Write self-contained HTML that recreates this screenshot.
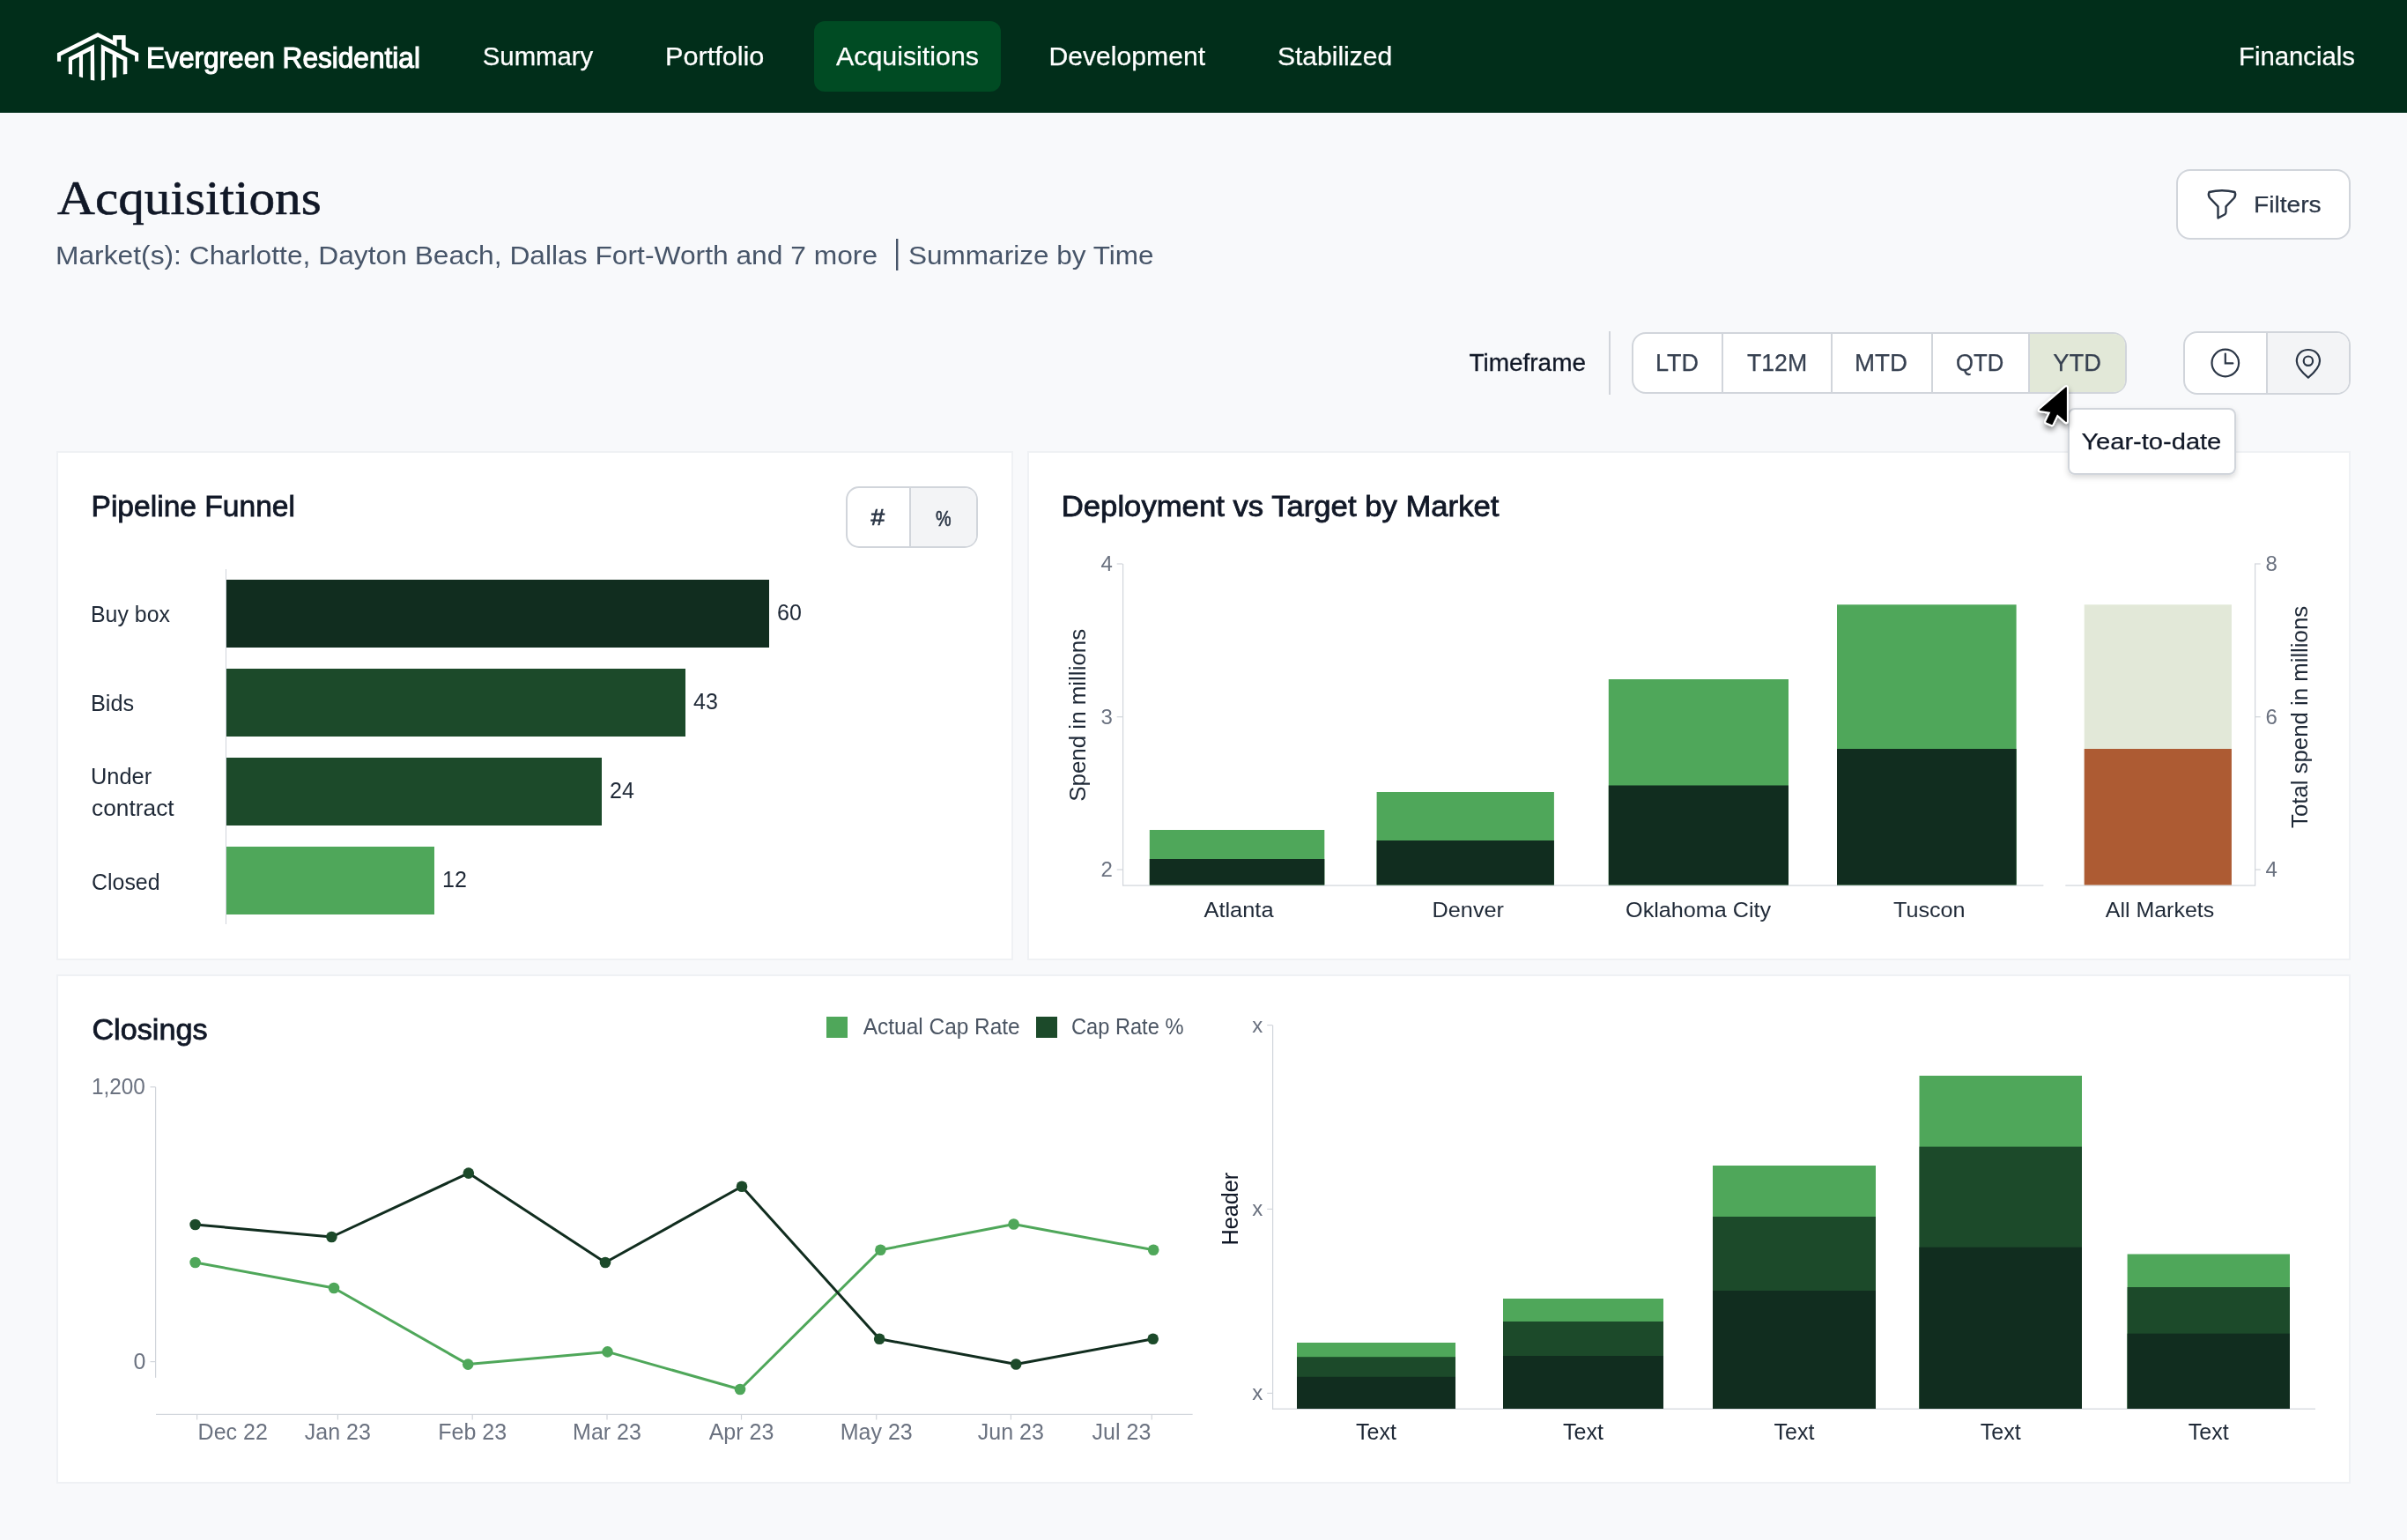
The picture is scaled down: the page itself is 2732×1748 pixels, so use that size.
<!DOCTYPE html>
<html><head><meta charset="utf-8"><title>Acquisitions</title>
<style>html,body{margin:0;padding:0;background:#f8f9fb;width:2732px;height:1748px;overflow:hidden;font-family:"Liberation Sans", sans-serif}</style>
</head><body>
<svg width="2732" height="1748" viewBox="0 0 2732 1748" style="display:block;will-change:transform"><rect x="0.0" y="0.0" width="2732.0" height="1748.0" fill="#f8f9fb" />
<rect x="0.0" y="0.0" width="2732.0" height="128.0" fill="#012e1a" />
<rect x="924.0" y="24.0" width="212.0" height="80.0" fill="#004b23" rx="12" />
<g transform="translate(50,20) scale(0.08309)" fill="#ffffff"><path d="M180,600 L180,485 L735,205 L940,310 L940,240 L1115,240 L1115,400 L1290,485 L1290,600 L1240,600 L1240,520 L1060,435 L1060,300 L995,300 L995,395 L735,265 L230,520 L230,600 Z"/><path d="M335,770 L335,545 L685,365 L690,860 L635,850 L635,455 L530,505 L530,820 L480,805 L480,535 L385,580 L385,775 Z"/><path d="M780,860 L780,365 L1135,545 L1135,770 L1080,775 L1080,580 L990,535 L990,815 L935,820 L935,505 L830,455 L830,850 Z"/></g>
<text x="166.0" y="76.9" font-family='"Liberation Sans", sans-serif' font-size="32.5" font-weight="normal" fill="#ffffff" text-anchor="start" textLength="310.9" lengthAdjust="spacingAndGlyphs" stroke="#ffffff" stroke-width="1.1">Evergreen Residential</text>
<text x="547.8" y="74.3" font-family='"Liberation Sans", sans-serif' font-size="29.5" font-weight="normal" fill="#ffffff" text-anchor="start" textLength="125.5" lengthAdjust="spacingAndGlyphs" stroke="#ffffff" stroke-width="0.25">Summary</text>
<text x="755.0" y="74.3" font-family='"Liberation Sans", sans-serif' font-size="29.5" font-weight="normal" fill="#ffffff" text-anchor="start" textLength="112.4" lengthAdjust="spacingAndGlyphs" stroke="#ffffff" stroke-width="0.25">Portfolio</text>
<text x="949.0" y="74.3" font-family='"Liberation Sans", sans-serif' font-size="29.5" font-weight="normal" fill="#ffffff" text-anchor="start" textLength="162.0" lengthAdjust="spacingAndGlyphs" stroke="#ffffff" stroke-width="0.25">Acquisitions</text>
<text x="1190.5" y="74.3" font-family='"Liberation Sans", sans-serif' font-size="29.5" font-weight="normal" fill="#ffffff" text-anchor="start" textLength="177.6" lengthAdjust="spacingAndGlyphs" stroke="#ffffff" stroke-width="0.25">Development</text>
<text x="1449.9" y="74.3" font-family='"Liberation Sans", sans-serif' font-size="29.5" font-weight="normal" fill="#ffffff" text-anchor="start" textLength="130.4" lengthAdjust="spacingAndGlyphs" stroke="#ffffff" stroke-width="0.25">Stabilized</text>
<text x="2541.0" y="74.3" font-family='"Liberation Sans", sans-serif' font-size="29.5" font-weight="normal" fill="#ffffff" text-anchor="start" textLength="132.0" lengthAdjust="spacingAndGlyphs" stroke="#ffffff" stroke-width="0.25">Financials</text>
<text x="65.1" y="243.0" font-family='"Liberation Serif", serif' font-size="55" font-weight="normal" fill="#111827" text-anchor="start" textLength="299.7" lengthAdjust="spacingAndGlyphs" stroke="#111827" stroke-width="0.55">Acquisitions</text>
<text x="63.0" y="300.0" font-family='"Liberation Sans", sans-serif' font-size="30" font-weight="normal" fill="#475569" text-anchor="start" textLength="933.1" lengthAdjust="spacingAndGlyphs" >Market(s): Charlotte, Dayton Beach, Dallas Fort-Worth and 7 more</text>
<rect x="1017.0" y="271.0" width="2.4" height="36.0" fill="#475569" />
<text x="1031.0" y="300.4" font-family='"Liberation Sans", sans-serif' font-size="30" font-weight="normal" fill="#475569" text-anchor="start" textLength="278.6" lengthAdjust="spacingAndGlyphs" >Summarize by Time</text>
<rect x="2471.0" y="193.0" width="196.0" height="78.0" fill="#ffffff" rx="15" stroke="#d1d5db" stroke-width="2" />
<path d="M2507.5,218 Q2522,214.5 2536.5,218 Q2538,221.5 2536,224.5 L2526.5,234.3 L2526.5,240.5 Q2526.5,242.5 2525,243.5 L2517.5,247.5 L2517.5,234.3 L2508,224.5 Q2506,221.5 2507.5,218 Z" fill="none" stroke="#2b3646" stroke-width="2.4" stroke-linejoin="round"/>
<text x="2558.0" y="240.8" font-family='"Liberation Sans", sans-serif' font-size="26" font-weight="normal" fill="#2b3646" text-anchor="start" textLength="76.6" lengthAdjust="spacingAndGlyphs" stroke="#2b3646" stroke-width="0.25">Filters</text>
<text x="1667.4" y="421.0" font-family='"Liberation Sans", sans-serif' font-size="27" font-weight="normal" fill="#111827" text-anchor="start" textLength="132.6" lengthAdjust="spacingAndGlyphs" stroke="#111827" stroke-width="0.3">Timeframe</text>
<rect x="1826.0" y="376.0" width="2.0" height="72.0" fill="#d1d5db" />
<rect x="1853.0" y="378.0" width="560.0" height="68.0" fill="#ffffff" rx="15" stroke="#d1d5db" stroke-width="2" />
<path d="M2303,379 L2398,379 Q2412,379 2412,393 L2412,431 Q2412,445 2398,445 L2303,445 Z" fill="#e2e8d8"/>
<rect x="1954.0" y="379.0" width="2.0" height="66.0" fill="#d1d5db" />
<rect x="2078.0" y="379.0" width="2.0" height="66.0" fill="#d1d5db" />
<rect x="2192.0" y="379.0" width="2.0" height="66.0" fill="#d1d5db" />
<rect x="2302.0" y="379.0" width="2.0" height="66.0" fill="#d1d5db" />
<text x="1879.0" y="421.0" font-family='"Liberation Sans", sans-serif' font-size="27" font-weight="normal" fill="#374151" text-anchor="start" textLength="49.0" lengthAdjust="spacingAndGlyphs" stroke="#374151" stroke-width="0.25">LTD</text>
<text x="1983.0" y="421.0" font-family='"Liberation Sans", sans-serif' font-size="27" font-weight="normal" fill="#374151" text-anchor="start" textLength="68.1" lengthAdjust="spacingAndGlyphs" stroke="#374151" stroke-width="0.25">T12M</text>
<text x="2105.0" y="421.0" font-family='"Liberation Sans", sans-serif' font-size="27" font-weight="normal" fill="#374151" text-anchor="start" textLength="60.0" lengthAdjust="spacingAndGlyphs" stroke="#374151" stroke-width="0.25">MTD</text>
<text x="2220.0" y="421.0" font-family='"Liberation Sans", sans-serif' font-size="27" font-weight="normal" fill="#374151" text-anchor="start" textLength="54.2" lengthAdjust="spacingAndGlyphs" stroke="#374151" stroke-width="0.25">QTD</text>
<text x="2330.2" y="421.0" font-family='"Liberation Sans", sans-serif' font-size="27" font-weight="normal" fill="#374151" text-anchor="start" textLength="54.7" lengthAdjust="spacingAndGlyphs" stroke="#374151" stroke-width="0.25">YTD</text>
<rect x="2479.0" y="377.0" width="188.0" height="70.0" fill="#ffffff" rx="15" stroke="#d1d5db" stroke-width="2" />
<path d="M2573,378 L2651,378 Q2666,378 2666,393 L2666,431 Q2666,446 2651,446 L2573,446 Z" fill="#f3f4f6"/>
<rect x="2572.0" y="378.0" width="2.0" height="68.0" fill="#d1d5db" />
<circle cx="2525.8" cy="412" r="15.3" fill="none" stroke="#2b3646" stroke-width="2.2"/>
<path d="M2525.8,401.5 L2525.8,412.4 L2534.3,412.4" fill="none" stroke="#2b3646" stroke-width="2.2" stroke-linecap="round"/>
<path d="M2619.9,428.6 C2612,422 2606.8,415.5 2606.8,409.8 C2606.8,402 2612.5,397 2619.9,397 C2627.3,397 2633,402 2633,409.8 C2633,415.5 2627.8,422 2619.9,428.6 Z" fill="none" stroke="#2b3646" stroke-width="2.2" stroke-linejoin="round"/>
<circle cx="2619.9" cy="409.7" r="5.2" fill="none" stroke="#2b3646" stroke-width="2.2"/>
<rect x="65.0" y="513.0" width="1084.0" height="576.0" fill="#ffffff" stroke="#eff1f4" stroke-width="2" />
<rect x="1167.0" y="513.0" width="1500.0" height="576.0" fill="#ffffff" stroke="#eff1f4" stroke-width="2" />
<rect x="65.0" y="1107.0" width="2602.0" height="576.0" fill="#ffffff" stroke="#eff1f4" stroke-width="2" />
<text x="103.5" y="586.0" font-family='"Liberation Sans", sans-serif' font-size="32.5" font-weight="normal" fill="#111827" text-anchor="start" textLength="231.5" lengthAdjust="spacingAndGlyphs" stroke="#111827" stroke-width="0.8">Pipeline Funnel</text>
<rect x="961.0" y="553.0" width="148.0" height="68.0" fill="#ffffff" rx="14" stroke="#d1d5db" stroke-width="2" />
<path d="M1033,554 L1094,554 Q1108,554 1108,568 L1108,606 Q1108,620 1094,620 L1033,620 Z" fill="#f3f4f6"/>
<rect x="1032.0" y="554.0" width="2.0" height="66.0" fill="#d1d5db" />
<text x="988.4" y="596.0" font-family='"Liberation Sans", sans-serif' font-size="26" font-weight="normal" fill="#2b3646" text-anchor="start" textLength="15.6" lengthAdjust="spacingAndGlyphs" stroke="#2b3646" stroke-width="0.7">#</text>
<text x="1062.0" y="596.5" font-family='"Liberation Sans", sans-serif' font-size="24.5" font-weight="normal" fill="#2b3646" text-anchor="start" textLength="17.6" lengthAdjust="spacingAndGlyphs" stroke="#2b3646" stroke-width="0.6">%</text>
<rect x="256.0" y="646.0" width="1.0" height="403.0" fill="#d1d5db" />
<rect x="257.0" y="658.0" width="616.0" height="77.0" fill="#112d1f" />
<text x="882.0" y="704.0" font-family='"Liberation Sans", sans-serif' font-size="25" font-weight="normal" fill="#1f2937" text-anchor="start" >60</text>
<rect x="257.0" y="759.0" width="521.0" height="77.0" fill="#1c4a2a" />
<text x="787.0" y="805.0" font-family='"Liberation Sans", sans-serif' font-size="25" font-weight="normal" fill="#1f2937" text-anchor="start" >43</text>
<rect x="257.0" y="860.0" width="426.0" height="77.0" fill="#1c4a2a" />
<text x="692.0" y="906.0" font-family='"Liberation Sans", sans-serif' font-size="25" font-weight="normal" fill="#1f2937" text-anchor="start" >24</text>
<rect x="257.0" y="961.0" width="236.0" height="77.0" fill="#4fa75a" />
<text x="502.0" y="1007.0" font-family='"Liberation Sans", sans-serif' font-size="25" font-weight="normal" fill="#1f2937" text-anchor="start" >12</text>
<text x="103.0" y="706.3" font-family='"Liberation Sans", sans-serif' font-size="25" font-weight="normal" fill="#1f2937" text-anchor="start" textLength="90.0" lengthAdjust="spacingAndGlyphs" >Buy box</text>
<text x="103.0" y="806.9" font-family='"Liberation Sans", sans-serif' font-size="25" font-weight="normal" fill="#1f2937" text-anchor="start" textLength="49.2" lengthAdjust="spacingAndGlyphs" >Bids</text>
<text x="103.0" y="889.5" font-family='"Liberation Sans", sans-serif' font-size="25" font-weight="normal" fill="#1f2937" text-anchor="start" textLength="69.2" lengthAdjust="spacingAndGlyphs" >Under</text>
<text x="104.0" y="926.3" font-family='"Liberation Sans", sans-serif' font-size="25" font-weight="normal" fill="#1f2937" text-anchor="start" textLength="93.6" lengthAdjust="spacingAndGlyphs" >contract</text>
<text x="104.0" y="1009.5" font-family='"Liberation Sans", sans-serif' font-size="25" font-weight="normal" fill="#1f2937" text-anchor="start" textLength="77.6" lengthAdjust="spacingAndGlyphs" >Closed</text>
<text x="1204.8" y="586.1" font-family='"Liberation Sans", sans-serif' font-size="32.5" font-weight="normal" fill="#111827" text-anchor="start" textLength="496.6" lengthAdjust="spacingAndGlyphs" stroke="#111827" stroke-width="0.8">Deployment vs Target by Market</text>
<rect x="1274.0" y="640.0" width="1.2" height="365.0" fill="#d1d5db" />
<rect x="1274.0" y="1004.5" width="1045.4" height="1.2" fill="#d1d5db" />
<rect x="2344.3" y="1004.5" width="215.0" height="1.2" fill="#d1d5db" />
<rect x="2559.0" y="640.0" width="1.2" height="365.7" fill="#d1d5db" />
<rect x="1267.7" y="639.4" width="6.5" height="1.2" fill="#d1d5db" />
<rect x="2559.0" y="639.4" width="6.7" height="1.2" fill="#d1d5db" />
<text x="1262.9" y="648.0" font-family='"Liberation Sans", sans-serif' font-size="24" font-weight="normal" fill="#6b7280" text-anchor="end" >4</text>
<text x="2571.4" y="648.0" font-family='"Liberation Sans", sans-serif' font-size="24" font-weight="normal" fill="#6b7280" text-anchor="start" >8</text>
<rect x="1267.7" y="813.1" width="6.5" height="1.2" fill="#d1d5db" />
<rect x="2559.0" y="813.1" width="6.7" height="1.2" fill="#d1d5db" />
<text x="1262.9" y="821.7" font-family='"Liberation Sans", sans-serif' font-size="24" font-weight="normal" fill="#6b7280" text-anchor="end" >3</text>
<text x="2571.4" y="821.7" font-family='"Liberation Sans", sans-serif' font-size="24" font-weight="normal" fill="#6b7280" text-anchor="start" >6</text>
<rect x="1267.7" y="986.5" width="6.5" height="1.2" fill="#d1d5db" />
<rect x="2559.0" y="986.5" width="6.7" height="1.2" fill="#d1d5db" />
<text x="1262.9" y="995.1" font-family='"Liberation Sans", sans-serif' font-size="24" font-weight="normal" fill="#6b7280" text-anchor="end" >2</text>
<text x="2571.4" y="995.1" font-family='"Liberation Sans", sans-serif' font-size="24" font-weight="normal" fill="#6b7280" text-anchor="start" >4</text>
<rect x="1304.8" y="942.0" width="198.5" height="62.5" fill="#4fa75a" />
<rect x="1304.8" y="975.0" width="198.5" height="29.5" fill="#112d1f" />
<text x="1406.0" y="1040.8" font-family='"Liberation Sans", sans-serif' font-size="24.5" font-weight="normal" fill="#1f2937" text-anchor="middle" textLength="79.1" lengthAdjust="spacingAndGlyphs" >Atlanta</text>
<rect x="1562.6" y="899.0" width="201.3" height="105.5" fill="#4fa75a" />
<rect x="1562.6" y="954.0" width="201.3" height="50.5" fill="#112d1f" />
<text x="1666.3" y="1040.8" font-family='"Liberation Sans", sans-serif' font-size="24.5" font-weight="normal" fill="#1f2937" text-anchor="middle" textLength="81.4" lengthAdjust="spacingAndGlyphs" >Denver</text>
<rect x="1825.8" y="771.0" width="204.2" height="233.5" fill="#4fa75a" />
<rect x="1825.8" y="891.5" width="204.2" height="113.0" fill="#112d1f" />
<text x="1927.6" y="1040.8" font-family='"Liberation Sans", sans-serif' font-size="24.5" font-weight="normal" fill="#1f2937" text-anchor="middle" textLength="165.0" lengthAdjust="spacingAndGlyphs" >Oklahoma City</text>
<rect x="2085.0" y="686.3" width="203.6" height="318.2" fill="#4fa75a" />
<rect x="2085.0" y="850.0" width="203.6" height="154.5" fill="#112d1f" />
<text x="2189.8" y="1040.8" font-family='"Liberation Sans", sans-serif' font-size="24.5" font-weight="normal" fill="#1f2937" text-anchor="middle" textLength="81.5" lengthAdjust="spacingAndGlyphs" >Tuscon</text>
<rect x="2365.7" y="686.3" width="167.2" height="318.2" fill="#e2e8d8" />
<rect x="2365.7" y="850.0" width="167.2" height="154.5" fill="#ad5b33" />
<text x="2451.5" y="1040.8" font-family='"Liberation Sans", sans-serif' font-size="24.5" font-weight="normal" fill="#1f2937" text-anchor="middle" textLength="123.4" lengthAdjust="spacingAndGlyphs" >All Markets</text>
<text x="0.0" y="0.0" font-family='"Liberation Sans", sans-serif' font-size="25" font-weight="normal" fill="#1f2937" text-anchor="middle" textLength="196.0" lengthAdjust="spacingAndGlyphs" transform="translate(1232.1,811.8) rotate(-90)">Spend in millions</text>
<text x="0.0" y="0.0" font-family='"Liberation Sans", sans-serif' font-size="26" font-weight="normal" fill="#1f2937" text-anchor="middle" textLength="252.0" lengthAdjust="spacingAndGlyphs" transform="translate(2618.6,813.9) rotate(-90)">Total spend in millions</text>
<text x="104.4" y="1179.8" font-family='"Liberation Sans", sans-serif' font-size="32.5" font-weight="normal" fill="#111827" text-anchor="start" textLength="131.2" lengthAdjust="spacingAndGlyphs" stroke="#111827" stroke-width="0.8">Closings</text>
<rect x="938.0" y="1154.0" width="24.0" height="24.0" fill="#4fa75a" />
<text x="979.8" y="1174.2" font-family='"Liberation Sans", sans-serif' font-size="25" font-weight="normal" fill="#4b5563" text-anchor="start" textLength="177.9" lengthAdjust="spacingAndGlyphs" >Actual Cap Rate</text>
<rect x="1176.0" y="1154.0" width="24.0" height="24.0" fill="#1c4a2a" />
<text x="1216.0" y="1174.2" font-family='"Liberation Sans", sans-serif' font-size="25" font-weight="normal" fill="#4b5563" text-anchor="start" textLength="127.4" lengthAdjust="spacingAndGlyphs" >Cap Rate %</text>
<rect x="176.0" y="1233.8" width="1.2" height="330.0" fill="#d1d5db" />
<rect x="170.5" y="1233.2" width="6.0" height="1.2" fill="#d1d5db" />
<rect x="170.5" y="1545.0" width="6.0" height="1.2" fill="#d1d5db" />
<text x="164.9" y="1242.1" font-family='"Liberation Sans", sans-serif' font-size="25" font-weight="normal" fill="#6b7280" text-anchor="end" textLength="61.0" lengthAdjust="spacingAndGlyphs" >1,200</text>
<text x="165.3" y="1554.1" font-family='"Liberation Sans", sans-serif' font-size="25" font-weight="normal" fill="#6b7280" text-anchor="end" >0</text>
<rect x="177.0" y="1604.8" width="1176.6" height="1.2" fill="#d1d5db" />
<rect x="223.0" y="1605.0" width="1.2" height="6.5" fill="#d1d5db" />
<text x="224.6" y="1634.1" font-family='"Liberation Sans", sans-serif' font-size="25" font-weight="normal" fill="#6b7280" text-anchor="start" >Dec 22</text>
<rect x="382.8" y="1605.0" width="1.2" height="6.5" fill="#d1d5db" />
<text x="383.4" y="1634.1" font-family='"Liberation Sans", sans-serif' font-size="25" font-weight="normal" fill="#6b7280" text-anchor="middle" >Jan 23</text>
<rect x="535.6" y="1605.0" width="1.2" height="6.5" fill="#d1d5db" />
<text x="536.2" y="1634.1" font-family='"Liberation Sans", sans-serif' font-size="25" font-weight="normal" fill="#6b7280" text-anchor="middle" >Feb 23</text>
<rect x="688.4" y="1605.0" width="1.2" height="6.5" fill="#d1d5db" />
<text x="689.0" y="1634.1" font-family='"Liberation Sans", sans-serif' font-size="25" font-weight="normal" fill="#6b7280" text-anchor="middle" >Mar 23</text>
<rect x="840.9" y="1605.0" width="1.2" height="6.5" fill="#d1d5db" />
<text x="841.5" y="1634.1" font-family='"Liberation Sans", sans-serif' font-size="25" font-weight="normal" fill="#6b7280" text-anchor="middle" >Apr 23</text>
<rect x="994.1" y="1605.0" width="1.2" height="6.5" fill="#d1d5db" />
<text x="994.7" y="1634.1" font-family='"Liberation Sans", sans-serif' font-size="25" font-weight="normal" fill="#6b7280" text-anchor="middle" >May 23</text>
<rect x="1146.8" y="1605.0" width="1.2" height="6.5" fill="#d1d5db" />
<text x="1147.4" y="1634.1" font-family='"Liberation Sans", sans-serif' font-size="25" font-weight="normal" fill="#6b7280" text-anchor="middle" >Jun 23</text>
<rect x="1306.7" y="1605.0" width="1.2" height="6.5" fill="#d1d5db" />
<text x="1306.3" y="1634.1" font-family='"Liberation Sans", sans-serif' font-size="25" font-weight="normal" fill="#6b7280" text-anchor="end" >Jul 23</text>
<polyline points="221.6,1433.0 379.0,1462.0 531.2,1548.6 689.5,1534.4 840.0,1577.0 999.4,1418.8 1150.6,1389.5 1309.2,1418.8" fill="none" stroke="#4fa75a" stroke-width="3" stroke-linejoin="round"/>
<polyline points="221.6,1390.0 376.4,1404.0 531.8,1331.6 687.0,1433.0 842.0,1346.8 998.2,1519.8 1153.2,1548.5 1308.7,1519.8" fill="none" stroke="#112d1f" stroke-width="3" stroke-linejoin="round"/>
<circle cx="221.6" cy="1433.0" r="6.3" fill="#4fa75a"/>
<circle cx="379.0" cy="1462.0" r="6.3" fill="#4fa75a"/>
<circle cx="531.2" cy="1548.6" r="6.3" fill="#4fa75a"/>
<circle cx="689.5" cy="1534.4" r="6.3" fill="#4fa75a"/>
<circle cx="840.0" cy="1577.0" r="6.3" fill="#4fa75a"/>
<circle cx="999.4" cy="1418.8" r="6.3" fill="#4fa75a"/>
<circle cx="1150.6" cy="1389.5" r="6.3" fill="#4fa75a"/>
<circle cx="1309.2" cy="1418.8" r="6.3" fill="#4fa75a"/>
<circle cx="221.6" cy="1390.0" r="6.3" fill="#1c4a2a"/>
<circle cx="376.4" cy="1404.0" r="6.3" fill="#1c4a2a"/>
<circle cx="531.8" cy="1331.6" r="6.3" fill="#1c4a2a"/>
<circle cx="687.0" cy="1433.0" r="6.3" fill="#1c4a2a"/>
<circle cx="842.0" cy="1346.8" r="6.3" fill="#1c4a2a"/>
<circle cx="998.2" cy="1519.8" r="6.3" fill="#1c4a2a"/>
<circle cx="1153.2" cy="1548.5" r="6.3" fill="#1c4a2a"/>
<circle cx="1308.7" cy="1519.8" r="6.3" fill="#1c4a2a"/>
<rect x="1444.0" y="1163.6" width="1.2" height="436.0" fill="#d1d5db" />
<rect x="1444.0" y="1598.6" width="1184.0" height="1.2" fill="#d1d5db" />
<rect x="1438.2" y="1163.0" width="6.0" height="1.2" fill="#d1d5db" />
<text x="1433.2" y="1171.6" font-family='"Liberation Sans", sans-serif' font-size="24" font-weight="normal" fill="#6b7280" text-anchor="end" >x</text>
<rect x="1438.2" y="1371.8" width="6.0" height="1.2" fill="#d1d5db" />
<text x="1433.2" y="1380.4" font-family='"Liberation Sans", sans-serif' font-size="24" font-weight="normal" fill="#6b7280" text-anchor="end" >x</text>
<rect x="1438.2" y="1580.8" width="6.0" height="1.2" fill="#d1d5db" />
<text x="1433.2" y="1589.4" font-family='"Liberation Sans", sans-serif' font-size="24" font-weight="normal" fill="#6b7280" text-anchor="end" >x</text>
<text x="0.0" y="0.0" font-family='"Liberation Sans", sans-serif' font-size="25" font-weight="normal" fill="#111827" text-anchor="middle" textLength="82.8" lengthAdjust="spacingAndGlyphs" transform="translate(1404.8,1372.2) rotate(-90)">Header</text>
<rect x="1472.0" y="1524.0" width="180.0" height="75.0" fill="#4fa75a" />
<rect x="1472.0" y="1540.2" width="180.0" height="58.8" fill="#1c4a2a" />
<rect x="1472.0" y="1562.8" width="180.0" height="36.2" fill="#112d1f" />
<text x="1562.0" y="1633.7" font-family='"Liberation Sans", sans-serif' font-size="25" font-weight="normal" fill="#1f2937" text-anchor="middle" >Text</text>
<rect x="1706.0" y="1474.0" width="182.0" height="125.0" fill="#4fa75a" />
<rect x="1706.0" y="1500.0" width="182.0" height="99.0" fill="#1c4a2a" />
<rect x="1706.0" y="1539.0" width="182.0" height="60.0" fill="#112d1f" />
<text x="1797.0" y="1633.7" font-family='"Liberation Sans", sans-serif' font-size="25" font-weight="normal" fill="#1f2937" text-anchor="middle" >Text</text>
<rect x="1944.0" y="1323.0" width="185.0" height="276.0" fill="#4fa75a" />
<rect x="1944.0" y="1381.0" width="185.0" height="218.0" fill="#1c4a2a" />
<rect x="1944.0" y="1465.0" width="185.0" height="134.0" fill="#112d1f" />
<text x="2036.5" y="1633.7" font-family='"Liberation Sans", sans-serif' font-size="25" font-weight="normal" fill="#1f2937" text-anchor="middle" >Text</text>
<rect x="2178.5" y="1221.0" width="184.5" height="378.0" fill="#4fa75a" />
<rect x="2178.5" y="1301.6" width="184.5" height="297.4" fill="#1c4a2a" />
<rect x="2178.5" y="1415.7" width="184.5" height="183.3" fill="#112d1f" />
<text x="2270.8" y="1633.7" font-family='"Liberation Sans", sans-serif' font-size="25" font-weight="normal" fill="#1f2937" text-anchor="middle" >Text</text>
<rect x="2414.6" y="1423.5" width="184.4" height="175.5" fill="#4fa75a" />
<rect x="2414.6" y="1461.0" width="184.4" height="138.0" fill="#1c4a2a" />
<rect x="2414.6" y="1513.7" width="184.4" height="85.3" fill="#112d1f" />
<text x="2506.8" y="1633.7" font-family='"Liberation Sans", sans-serif' font-size="25" font-weight="normal" fill="#1f2937" text-anchor="middle" >Text</text>
<defs><filter id="sh" x="-30%" y="-30%" width="160%" height="180%"><feDropShadow dx="0" dy="3" stdDeviation="3" flood-color="#000" flood-opacity="0.15"/></filter><filter id="csh" x="-50%" y="-50%" width="200%" height="200%"><feDropShadow dx="0" dy="4" stdDeviation="3" flood-color="#000" flood-opacity="0.45"/></filter></defs>
<rect x="2348.0" y="464.0" width="189.0" height="74.0" fill="#ffffff" rx="7" stroke="#d1d5db" stroke-width="2" filter="url(#sh)"/>
<text x="2362.4" y="509.7" font-family='"Liberation Sans", sans-serif' font-size="26" font-weight="normal" fill="#111827" text-anchor="start" textLength="158.9" lengthAdjust="spacingAndGlyphs" stroke="#111827" stroke-width="0.25">Year-to-date</text>
<path d="M2345.15,439.98 L2345.15,478.33 L2334.78,469.15 L2328.95,481.35 L2322.9,478.87 L2328.3,467.3 L2315.66,465.37 Z" fill="#fff" stroke="#fff" stroke-width="5.6" stroke-linejoin="round" filter="url(#csh)"/>
<path d="M2345.15,439.98 L2345.15,478.33 L2334.78,469.15 L2328.95,481.35 L2322.9,478.87 L2328.3,467.3 L2315.66,465.37 Z" fill="#000" stroke="#000" stroke-width="1.4" stroke-linejoin="round"/></svg>
</body></html>
